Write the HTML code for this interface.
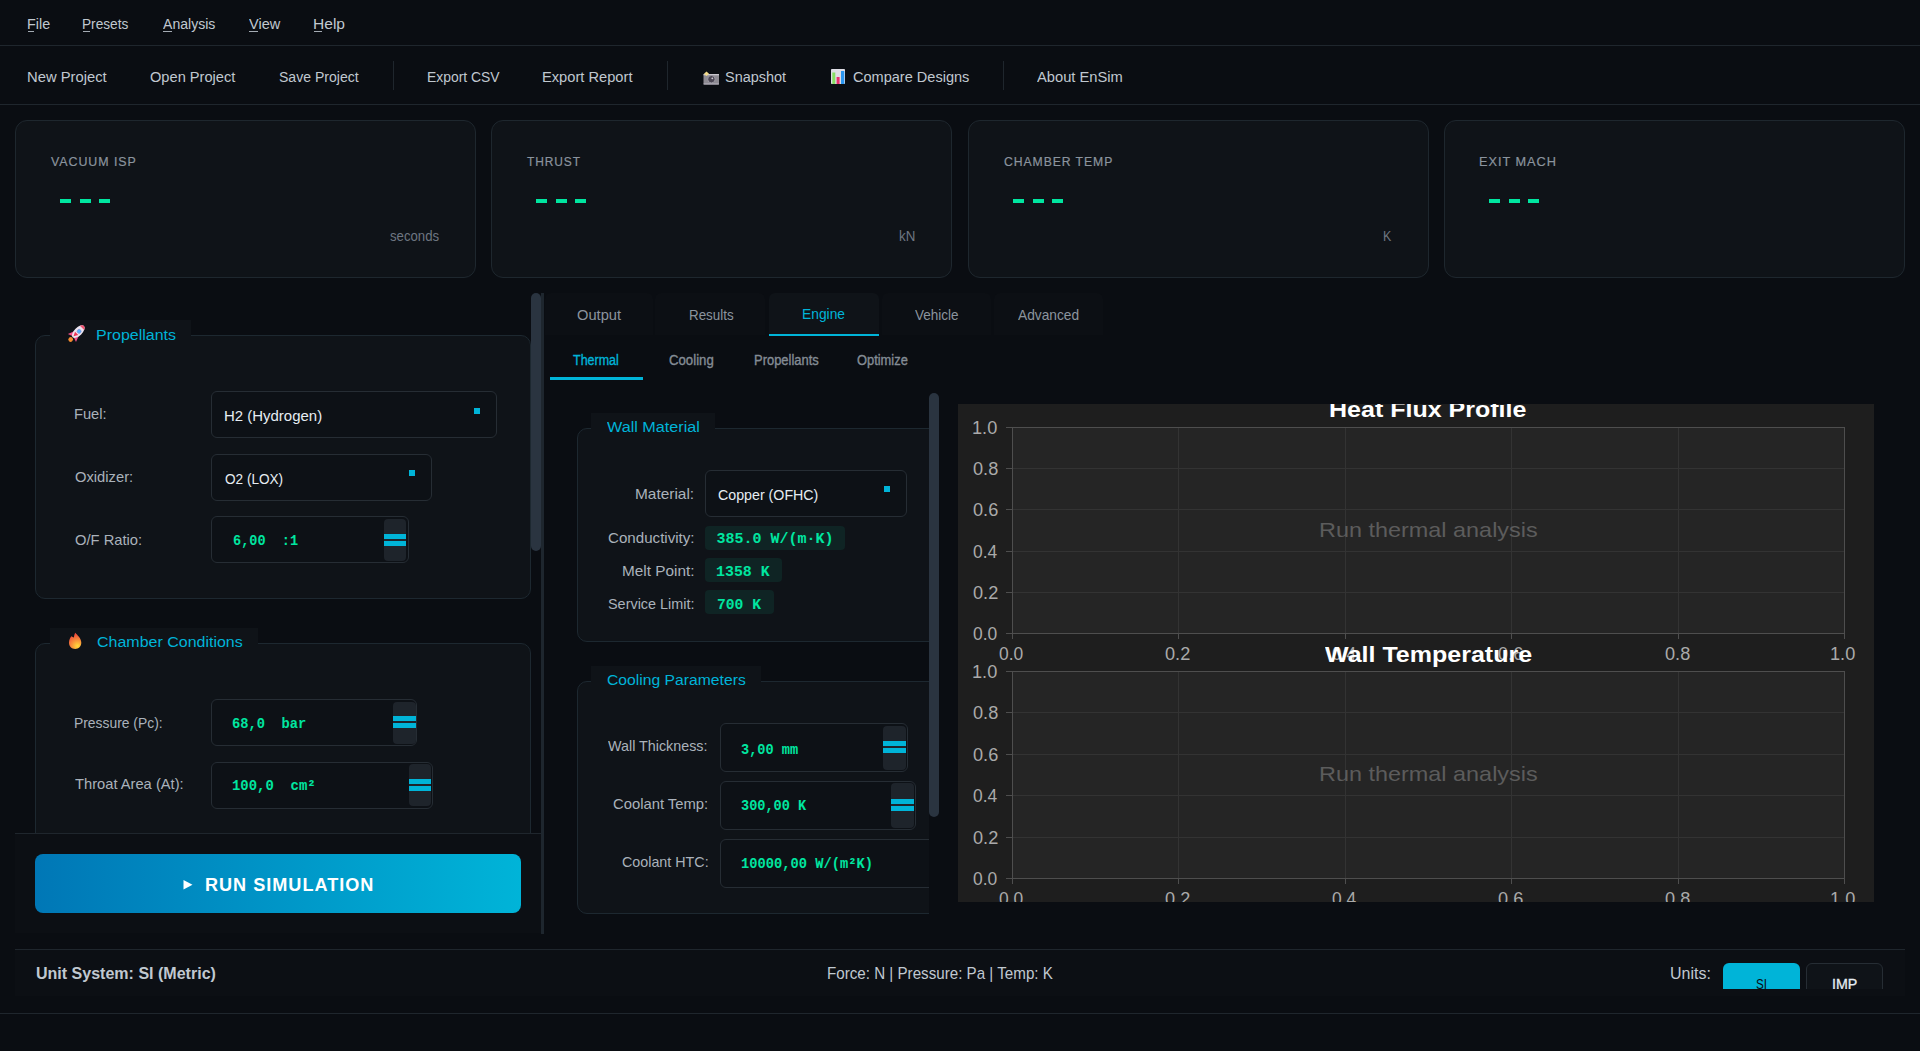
<!DOCTYPE html>
<html><head><meta charset="utf-8"><title>EnSim</title>
<style>
html,body{margin:0;padding:0;}
body{width:1920px;height:1051px;background:#0a0d12;position:relative;overflow:hidden;font-family:"Liberation Sans",sans-serif;}
</style></head><body>
<div style='position:absolute;left:27.08px;top:16.00px;font-family:"Liberation Sans",sans-serif;font-size:15.5px;font-weight:400;line-height:15.5px;color:#c0c8d0;white-space:pre;letter-spacing:0px;transform:scaleX(0.9248);transform-origin:0 0;'>File</div>
<div style='position:absolute;left:82.42px;top:16.00px;font-family:"Liberation Sans",sans-serif;font-size:15.5px;font-weight:400;line-height:15.5px;color:#c0c8d0;white-space:pre;letter-spacing:0px;transform:scaleX(0.8823);transform-origin:0 0;'>Presets</div>
<div style='position:absolute;left:163.00px;top:16.00px;font-family:"Liberation Sans",sans-serif;font-size:15.5px;font-weight:400;line-height:15.5px;color:#c0c8d0;white-space:pre;letter-spacing:0px;transform:scaleX(0.9074);transform-origin:0 0;'>Analysis</div>
<div style='position:absolute;left:249.00px;top:16.00px;font-family:"Liberation Sans",sans-serif;font-size:15.5px;font-weight:400;line-height:15.5px;color:#c0c8d0;white-space:pre;letter-spacing:0px;transform:scaleX(0.9378);transform-origin:0 0;'>View</div>
<div style='position:absolute;left:313.00px;top:16.00px;font-family:"Liberation Sans",sans-serif;font-size:15.5px;font-weight:400;line-height:15.5px;color:#c0c8d0;white-space:pre;letter-spacing:0px;transform:scaleX(1.0047);transform-origin:0 0;'>Help</div>
<div style='position:absolute;left:28px;top:31px;width:6px;height:1px;background:#c0c8d0;opacity:.85'></div>
<div style='position:absolute;left:83.3px;top:31px;width:7px;height:1px;background:#c0c8d0;opacity:.85'></div>
<div style='position:absolute;left:163px;top:31px;width:9px;height:1px;background:#c0c8d0;opacity:.85'></div>
<div style='position:absolute;left:249px;top:31px;width:9px;height:1px;background:#c0c8d0;opacity:.85'></div>
<div style='position:absolute;left:314px;top:31px;width:8px;height:1px;background:#c0c8d0;opacity:.85'></div>
<div style='position:absolute;left:0px;top:45px;width:1920px;height:1px;background:#1f262d'></div>
<div style='position:absolute;left:27.35px;top:69.00px;font-family:"Liberation Sans",sans-serif;font-size:15.5px;font-weight:400;line-height:15.5px;color:#c0c8d0;white-space:pre;letter-spacing:0px;transform:scaleX(0.9538);transform-origin:0 0;'>New Project</div>
<div style='position:absolute;left:150.00px;top:69.00px;font-family:"Liberation Sans",sans-serif;font-size:15.5px;font-weight:400;line-height:15.5px;color:#c0c8d0;white-space:pre;letter-spacing:0px;transform:scaleX(0.9434);transform-origin:0 0;'>Open Project</div>
<div style='position:absolute;left:278.50px;top:69.00px;font-family:"Liberation Sans",sans-serif;font-size:15.5px;font-weight:400;line-height:15.5px;color:#c0c8d0;white-space:pre;letter-spacing:0px;transform:scaleX(0.9066);transform-origin:0 0;'>Save Project</div>
<div style='position:absolute;left:426.80px;top:69.00px;font-family:"Liberation Sans",sans-serif;font-size:15.5px;font-weight:400;line-height:15.5px;color:#c0c8d0;white-space:pre;letter-spacing:0px;transform:scaleX(0.8966);transform-origin:0 0;'>Export CSV</div>
<div style='position:absolute;left:541.55px;top:69.00px;font-family:"Liberation Sans",sans-serif;font-size:15.5px;font-weight:400;line-height:15.5px;color:#c0c8d0;white-space:pre;letter-spacing:0px;transform:scaleX(0.9463);transform-origin:0 0;'>Export Report</div>
<div style='position:absolute;left:725.00px;top:69.00px;font-family:"Liberation Sans",sans-serif;font-size:15.5px;font-weight:400;line-height:15.5px;color:#c0c8d0;white-space:pre;letter-spacing:0px;transform:scaleX(0.9322);transform-origin:0 0;'>Snapshot</div>
<div style='position:absolute;left:852.70px;top:69.00px;font-family:"Liberation Sans",sans-serif;font-size:15.5px;font-weight:400;line-height:15.5px;color:#c0c8d0;white-space:pre;letter-spacing:0px;transform:scaleX(0.9380);transform-origin:0 0;'>Compare Designs</div>
<div style='position:absolute;left:1037.30px;top:69.00px;font-family:"Liberation Sans",sans-serif;font-size:15.5px;font-weight:400;line-height:15.5px;color:#c0c8d0;white-space:pre;letter-spacing:0px;transform:scaleX(0.9492);transform-origin:0 0;'>About EnSim</div>
<div style='position:absolute;left:393px;top:61px;width:1px;height:29px;background:#1f262d'></div>
<div style='position:absolute;left:667px;top:61px;width:1px;height:29px;background:#1f262d'></div>
<div style='position:absolute;left:1003px;top:61px;width:1px;height:29px;background:#1f262d'></div>
<div style='position:absolute;left:0px;top:104px;width:1920px;height:1px;background:#1f262d'></div>
<div style='position:absolute;left:15px;top:120px;width:461px;height:158px;box-sizing:border-box;border:1px solid #1e272e;border-radius:12px;background:#0f1318'></div>
<div style='position:absolute;left:51.40px;top:155.00px;font-family:"Liberation Sans",sans-serif;font-size:13.2px;font-weight:400;line-height:13.2px;color:#8b949e;white-space:pre;letter-spacing:1px;transform:scaleX(0.9414);transform-origin:0 0;-webkit-text-stroke:0.2px currentColor;'>VACUUM ISP</div>
<div style='position:absolute;left:60px;top:199px;width:11px;height:4px;background:#00e6a0'></div>
<div style='position:absolute;left:79.6px;top:199px;width:11px;height:4px;background:#00e6a0'></div>
<div style='position:absolute;left:99px;top:199px;width:11px;height:4px;background:#00e6a0'></div>
<div style='position:absolute;left:390.00px;top:229.00px;font-family:"Liberation Sans",sans-serif;font-size:14.3px;font-weight:400;line-height:14.3px;color:#6e7681;white-space:pre;letter-spacing:0px;transform:scaleX(0.9228);transform-origin:0 0;'>seconds</div>
<div style='position:absolute;left:491px;top:120px;width:461px;height:158px;box-sizing:border-box;border:1px solid #1e272e;border-radius:12px;background:#0f1318'></div>
<div style='position:absolute;left:527.40px;top:155.00px;font-family:"Liberation Sans",sans-serif;font-size:13.2px;font-weight:400;line-height:13.2px;color:#8b949e;white-space:pre;letter-spacing:1px;transform:scaleX(0.9072);transform-origin:0 0;-webkit-text-stroke:0.2px currentColor;'>THRUST</div>
<div style='position:absolute;left:536px;top:199px;width:11px;height:4px;background:#00e6a0'></div>
<div style='position:absolute;left:555.6px;top:199px;width:11px;height:4px;background:#00e6a0'></div>
<div style='position:absolute;left:575px;top:199px;width:11px;height:4px;background:#00e6a0'></div>
<div style='position:absolute;left:899.00px;top:229.00px;font-family:"Liberation Sans",sans-serif;font-size:14.3px;font-weight:400;line-height:14.3px;color:#6e7681;white-space:pre;letter-spacing:0px;transform:scaleX(0.9330);transform-origin:0 0;'>kN</div>
<div style='position:absolute;left:968px;top:120px;width:461px;height:158px;box-sizing:border-box;border:1px solid #1e272e;border-radius:12px;background:#0f1318'></div>
<div style='position:absolute;left:1004.40px;top:155.00px;font-family:"Liberation Sans",sans-serif;font-size:13.2px;font-weight:400;line-height:13.2px;color:#8b949e;white-space:pre;letter-spacing:1px;transform:scaleX(0.9255);transform-origin:0 0;-webkit-text-stroke:0.2px currentColor;'>CHAMBER TEMP</div>
<div style='position:absolute;left:1013px;top:199px;width:11px;height:4px;background:#00e6a0'></div>
<div style='position:absolute;left:1032.6px;top:199px;width:11px;height:4px;background:#00e6a0'></div>
<div style='position:absolute;left:1052px;top:199px;width:11px;height:4px;background:#00e6a0'></div>
<div style='position:absolute;left:1383.33px;top:229.00px;font-family:"Liberation Sans",sans-serif;font-size:14.3px;font-weight:400;line-height:14.3px;color:#6e7681;white-space:pre;letter-spacing:0px;transform:scaleX(0.8667);transform-origin:0 0;'>K</div>
<div style='position:absolute;left:1444px;top:120px;width:461px;height:158px;box-sizing:border-box;border:1px solid #1e272e;border-radius:12px;background:#0f1318'></div>
<div style='position:absolute;left:1479.43px;top:155.00px;font-family:"Liberation Sans",sans-serif;font-size:13.2px;font-weight:400;line-height:13.2px;color:#8b949e;white-space:pre;letter-spacing:1px;transform:scaleX(0.9658);transform-origin:0 0;-webkit-text-stroke:0.2px currentColor;'>EXIT MACH</div>
<div style='position:absolute;left:1489px;top:199px;width:11px;height:4px;background:#00e6a0'></div>
<div style='position:absolute;left:1508.6px;top:199px;width:11px;height:4px;background:#00e6a0'></div>
<div style='position:absolute;left:1528px;top:199px;width:11px;height:4px;background:#00e6a0'></div>
<div style='position:absolute;left:15px;top:833px;width:526px;height:100px;background:#0c0f14'></div>
<div style='position:absolute;left:15px;top:833px;width:526px;height:1px;background:#1f262d'></div>
<div style='position:absolute;left:15px;top:293px;width:516px;height:540px;overflow:hidden'><div style='position:absolute;left:-15px;top:-293px;width:1920px;height:1051px'>
<div style='position:absolute;left:35px;top:335px;width:496px;height:264px;box-sizing:border-box;border:1px solid #1d2830;border-radius:10px;background:#0f1318'></div>
<div style='position:absolute;left:50px;top:320px;width:141px;height:17px;background:#0f1318'></div>
<div style='position:absolute;left:96.27px;top:327.00px;font-family:"Liberation Sans",sans-serif;font-size:15.5px;font-weight:400;line-height:15.5px;color:#00b4d8;white-space:pre;letter-spacing:0px;transform:scaleX(1.0313);transform-origin:0 0;'>Propellants</div>
<div style='position:absolute;left:74.02px;top:406.20px;font-family:"Liberation Sans",sans-serif;font-size:15px;font-weight:400;line-height:15px;color:#aab2bb;white-space:pre;letter-spacing:0px;transform:scaleX(0.9782);transform-origin:0 0;'>Fuel:</div>
<div style='position:absolute;left:75.00px;top:469.30px;font-family:"Liberation Sans",sans-serif;font-size:15px;font-weight:400;line-height:15px;color:#aab2bb;white-space:pre;letter-spacing:0px;transform:scaleX(0.9826);transform-origin:0 0;'>Oxidizer:</div>
<div style='position:absolute;left:75.00px;top:531.70px;font-family:"Liberation Sans",sans-serif;font-size:15px;font-weight:400;line-height:15px;color:#aab2bb;white-space:pre;letter-spacing:0px;transform:scaleX(0.9824);transform-origin:0 0;'>O/F Ratio:</div>
<div style='position:absolute;left:211px;top:391px;width:286px;height:47px;box-sizing:border-box;border:1px solid #262d34;border-radius:6px;background:#0d1116'></div>
<div style='position:absolute;left:474px;top:408px;width:6px;height:6px;background:#00b4d8'></div>
<div style='position:absolute;left:224.33px;top:407.90px;font-family:"Liberation Sans",sans-serif;font-size:15.5px;font-weight:400;line-height:15.5px;color:#e6edf3;white-space:pre;letter-spacing:0px;transform:scaleX(0.9653);transform-origin:0 0;'>H2 (Hydrogen)</div>
<div style='position:absolute;left:211px;top:454px;width:221px;height:47px;box-sizing:border-box;border:1px solid #262d34;border-radius:6px;background:#0d1116'></div>
<div style='position:absolute;left:409px;top:470px;width:6px;height:6px;background:#00b4d8'></div>
<div style='position:absolute;left:225.30px;top:470.70px;font-family:"Liberation Sans",sans-serif;font-size:15.5px;font-weight:400;line-height:15.5px;color:#e6edf3;white-space:pre;letter-spacing:0px;transform:scaleX(0.8767);transform-origin:0 0;'>O2 (LOX)</div>
<div style='position:absolute;left:211px;top:516px;width:198px;height:47px;box-sizing:border-box;border:1px solid #262d34;border-radius:6px;background:#0d1116'></div>
<div style='position:absolute;left:384px;top:519px;width:22px;height:42px;background:#1e242b;border-radius:4px'></div>
<div style='position:absolute;left:384px;top:534px;width:22px;height:5px;background:#00b4d8'></div>
<div style='position:absolute;left:384px;top:541px;width:22px;height:5px;background:#00b4d8'></div>
<div style='position:absolute;left:232.70px;top:533.60px;font-family:"Liberation Mono",monospace;font-size:14.5px;font-weight:700;line-height:14.5px;color:#00e6a0;white-space:pre;letter-spacing:0px;transform:scaleX(0.9341);transform-origin:0 0;'>6,00  :1</div>
<div style='position:absolute;left:35px;top:643px;width:496px;height:300px;box-sizing:border-box;border:1px solid #1d2830;border-radius:10px;background:#0f1318'></div>
<div style='position:absolute;left:50px;top:628px;width:208px;height:17px;background:#0f1318'></div>
<div style='position:absolute;left:96.80px;top:634.00px;font-family:"Liberation Sans",sans-serif;font-size:15.5px;font-weight:400;line-height:15.5px;color:#00b4d8;white-space:pre;letter-spacing:0px;transform:scaleX(1.0315);transform-origin:0 0;'>Chamber Conditions</div>
<div style='position:absolute;left:74.48px;top:714.50px;font-family:"Liberation Sans",sans-serif;font-size:15px;font-weight:400;line-height:15px;color:#aab2bb;white-space:pre;letter-spacing:0px;transform:scaleX(0.9244);transform-origin:0 0;'>Pressure (Pc):</div>
<div style='position:absolute;left:75.40px;top:776.40px;font-family:"Liberation Sans",sans-serif;font-size:15px;font-weight:400;line-height:15px;color:#aab2bb;white-space:pre;letter-spacing:0px;transform:scaleX(0.9798);transform-origin:0 0;'>Throat Area (At):</div>
<div style='position:absolute;left:211px;top:699px;width:206px;height:47px;box-sizing:border-box;border:1px solid #262d34;border-radius:6px;background:#0d1116'></div>
<div style='position:absolute;left:392.5px;top:701.5px;width:23px;height:42px;background:#1e242b;border-radius:4px'></div>
<div style='position:absolute;left:392.5px;top:716.3px;width:23px;height:5px;background:#00b4d8'></div>
<div style='position:absolute;left:392.5px;top:723.3px;width:23px;height:5px;background:#00b4d8'></div>
<div style='position:absolute;left:232.30px;top:717.00px;font-family:"Liberation Mono",monospace;font-size:14.5px;font-weight:700;line-height:14.5px;color:#00e6a0;white-space:pre;letter-spacing:0px;transform:scaleX(0.9496);transform-origin:0 0;'>68,0  bar</div>
<div style='position:absolute;left:211px;top:762px;width:222px;height:47px;box-sizing:border-box;border:1px solid #262d34;border-radius:6px;background:#0d1116'></div>
<div style='position:absolute;left:409px;top:764px;width:22px;height:42px;background:#1e242b;border-radius:4px'></div>
<div style='position:absolute;left:409px;top:778.7px;width:22px;height:5px;background:#00b4d8'></div>
<div style='position:absolute;left:409px;top:785.7px;width:22px;height:5px;background:#00b4d8'></div>
<div style='position:absolute;left:232.30px;top:778.50px;font-family:"Liberation Mono",monospace;font-size:14.5px;font-weight:700;line-height:14.5px;color:#00e6a0;white-space:pre;letter-spacing:0px;transform:scaleX(0.9612);transform-origin:0 0;'>100,0  cm²</div>
</div></div>
<div style='position:absolute;left:531px;top:293px;width:10px;height:258px;background:#2a3440;border-radius:5px'></div>
<div style='position:absolute;left:541px;top:293px;width:3px;height:641px;background:#1e262e'></div>
<div style='position:absolute;left:35px;top:854px;width:486px;height:59px;border-radius:8px;background:linear-gradient(90deg,#0077b6,#00b4d8)'></div>
<svg style='position:absolute;left:183px;top:880px' width='10' height='10'><path d='M0.5 0 L9.5 4.75 L0.5 9.5 Z' fill='#ffffff'/></svg>
<div style='position:absolute;left:205.00px;top:876.20px;font-family:"Liberation Sans",sans-serif;font-size:18px;font-weight:700;line-height:18px;color:#ffffff;white-space:pre;letter-spacing:1px;transform:scaleX(1.0045);transform-origin:0 0;'>RUN SIMULATION</div>
<div style='position:absolute;left:545px;top:293px;width:108px;height:42px;border-radius:6px 6px 0 0;background:#0c0f14'></div>
<div style='position:absolute;left:655px;top:293px;width:110px;height:42px;border-radius:6px 6px 0 0;background:#0c0f14'></div>
<div style='position:absolute;left:769px;top:293px;width:110px;height:42px;border-radius:6px 6px 0 0;background:#0f1318'></div>
<div style='position:absolute;left:882px;top:293px;width:109px;height:42px;border-radius:6px 6px 0 0;background:#0c0f14'></div>
<div style='position:absolute;left:994px;top:293px;width:109px;height:42px;border-radius:6px 6px 0 0;background:#0c0f14'></div>
<div style='position:absolute;left:769px;top:334px;width:110px;height:2px;background:#00b4d8'></div>
<div style='position:absolute;left:576.70px;top:308.00px;font-family:"Liberation Sans",sans-serif;font-size:14.5px;font-weight:400;line-height:14.5px;color:#8b949e;white-space:pre;letter-spacing:0px;transform:scaleX(1.0115);transform-origin:0 0;'>Output</div>
<div style='position:absolute;left:688.58px;top:308.00px;font-family:"Liberation Sans",sans-serif;font-size:14.5px;font-weight:400;line-height:14.5px;color:#8b949e;white-space:pre;letter-spacing:0px;transform:scaleX(0.9236);transform-origin:0 0;'>Results</div>
<div style='position:absolute;left:801.80px;top:307.20px;font-family:"Liberation Sans",sans-serif;font-size:14.5px;font-weight:400;line-height:14.5px;color:#00b4d8;white-space:pre;letter-spacing:0px;transform:scaleX(0.9527);transform-origin:0 0;'>Engine</div>
<div style='position:absolute;left:914.70px;top:308.00px;font-family:"Liberation Sans",sans-serif;font-size:14.5px;font-weight:400;line-height:14.5px;color:#8b949e;white-space:pre;letter-spacing:0px;transform:scaleX(0.9316);transform-origin:0 0;'>Vehicle</div>
<div style='position:absolute;left:1018.40px;top:308.00px;font-family:"Liberation Sans",sans-serif;font-size:14.5px;font-weight:400;line-height:14.5px;color:#8b949e;white-space:pre;letter-spacing:0px;transform:scaleX(0.9468);transform-origin:0 0;'>Advanced</div>
<div style='position:absolute;left:573.30px;top:353.30px;font-family:"Liberation Sans",sans-serif;font-size:14px;font-weight:400;line-height:14px;color:#00b4d8;white-space:pre;letter-spacing:0px;transform:scaleX(0.8920);transform-origin:0 0;-webkit-text-stroke:0.35px currentColor;'>Thermal</div>
<div style='position:absolute;left:669.00px;top:353.30px;font-family:"Liberation Sans",sans-serif;font-size:14px;font-weight:400;line-height:14px;color:#848c95;white-space:pre;letter-spacing:0px;transform:scaleX(0.9424);transform-origin:0 0;-webkit-text-stroke:0.35px currentColor;'>Cooling</div>
<div style='position:absolute;left:754.08px;top:353.30px;font-family:"Liberation Sans",sans-serif;font-size:14px;font-weight:400;line-height:14px;color:#848c95;white-space:pre;letter-spacing:0px;transform:scaleX(0.9241);transform-origin:0 0;-webkit-text-stroke:0.35px currentColor;'>Propellants</div>
<div style='position:absolute;left:857.00px;top:353.30px;font-family:"Liberation Sans",sans-serif;font-size:14px;font-weight:400;line-height:14px;color:#848c95;white-space:pre;letter-spacing:0px;transform:scaleX(0.9198);transform-origin:0 0;-webkit-text-stroke:0.35px currentColor;'>Optimize</div>
<div style='position:absolute;left:550px;top:377px;width:93px;height:3px;background:#00b4d8'></div>
<div style='position:absolute;left:550px;top:393px;width:379px;height:540px;overflow:hidden'><div style='position:absolute;left:-550px;top:-393px;width:1920px;height:1051px'>
<div style='position:absolute;left:577px;top:428px;width:400px;height:214px;box-sizing:border-box;border:1px solid #1d2830;border-radius:10px;background:#0f1318'></div>
<div style='position:absolute;left:591px;top:413px;width:124px;height:17px;background:#0f1318'></div>
<div style='position:absolute;left:606.60px;top:419.20px;font-family:"Liberation Sans",sans-serif;font-size:15.5px;font-weight:400;line-height:15.5px;color:#00b4d8;white-space:pre;letter-spacing:0px;transform:scaleX(1.0434);transform-origin:0 0;'>Wall Material</div>
<div style='position:absolute;left:635.27px;top:485.50px;font-family:"Liberation Sans",sans-serif;font-size:15px;font-weight:400;line-height:15px;color:#aab2bb;white-space:pre;letter-spacing:0px;transform:scaleX(1.0280);transform-origin:0 0;'>Material:</div>
<div style='position:absolute;left:705px;top:470px;width:202px;height:47px;box-sizing:border-box;border:1px solid #262d34;border-radius:6px;background:#0d1116'></div>
<div style='position:absolute;left:884px;top:486px;width:6px;height:6px;background:#00b4d8'></div>
<div style='position:absolute;left:718.40px;top:487.20px;font-family:"Liberation Sans",sans-serif;font-size:15.5px;font-weight:400;line-height:15.5px;color:#e6edf3;white-space:pre;letter-spacing:0px;transform:scaleX(0.9174);transform-origin:0 0;'>Copper (OFHC)</div>
<div style='position:absolute;left:705px;top:526px;width:140px;height:24px;background:#0f2424;border-radius:4px'></div>
<div style='position:absolute;left:716.50px;top:532.00px;font-family:"Liberation Mono",monospace;font-size:15px;font-weight:700;line-height:15px;color:#00e6a0;white-space:pre;letter-spacing:0px;'>385.0 W/(m·K)</div>
<div style='position:absolute;left:607.80px;top:529.70px;font-family:"Liberation Sans",sans-serif;font-size:15px;font-weight:400;line-height:15px;color:#aab2bb;white-space:pre;letter-spacing:0px;transform:scaleX(1.0082);transform-origin:0 0;'>Conductivity:</div>
<div style='position:absolute;left:705px;top:558px;width:77px;height:24px;background:#0f2424;border-radius:4px'></div>
<div style='position:absolute;left:715.51px;top:565.00px;font-family:"Liberation Mono",monospace;font-size:15px;font-weight:700;line-height:15px;color:#00e6a0;white-space:pre;letter-spacing:0px;transform:scaleX(0.9942);transform-origin:0 0;'>1358 K</div>
<div style='position:absolute;left:621.88px;top:562.70px;font-family:"Liberation Sans",sans-serif;font-size:15px;font-weight:400;line-height:15px;color:#aab2bb;white-space:pre;letter-spacing:0px;transform:scaleX(1.0234);transform-origin:0 0;'>Melt Point:</div>
<div style='position:absolute;left:705px;top:590px;width:68.5px;height:24px;background:#0f2424;border-radius:4px'></div>
<div style='position:absolute;left:716.50px;top:598.00px;font-family:"Liberation Mono",monospace;font-size:15px;font-weight:700;line-height:15px;color:#00e6a0;white-space:pre;letter-spacing:0px;transform:scaleX(0.9777);transform-origin:0 0;'>700 K</div>
<div style='position:absolute;left:607.80px;top:595.70px;font-family:"Liberation Sans",sans-serif;font-size:15px;font-weight:400;line-height:15px;color:#aab2bb;white-space:pre;letter-spacing:0px;transform:scaleX(0.9611);transform-origin:0 0;'>Service Limit:</div>
<div style='position:absolute;left:577px;top:681px;width:400px;height:233px;box-sizing:border-box;border:1px solid #1d2830;border-radius:10px;background:#0f1318'></div>
<div style='position:absolute;left:591px;top:665.5px;width:170px;height:17.5px;background:#0f1318'></div>
<div style='position:absolute;left:606.50px;top:672.20px;font-family:"Liberation Sans",sans-serif;font-size:15.5px;font-weight:400;line-height:15.5px;color:#00b4d8;white-space:pre;letter-spacing:0px;transform:scaleX(1.0129);transform-origin:0 0;'>Cooling Parameters</div>
<div style='position:absolute;left:607.80px;top:738.30px;font-family:"Liberation Sans",sans-serif;font-size:15px;font-weight:400;line-height:15px;color:#aab2bb;white-space:pre;letter-spacing:0px;transform:scaleX(0.9545);transform-origin:0 0;'>Wall Thickness:</div>
<div style='position:absolute;left:612.70px;top:795.70px;font-family:"Liberation Sans",sans-serif;font-size:15px;font-weight:400;line-height:15px;color:#aab2bb;white-space:pre;letter-spacing:0px;transform:scaleX(0.9869);transform-origin:0 0;'>Coolant Temp:</div>
<div style='position:absolute;left:621.50px;top:853.50px;font-family:"Liberation Sans",sans-serif;font-size:15px;font-weight:400;line-height:15px;color:#aab2bb;white-space:pre;letter-spacing:0px;transform:scaleX(0.9532);transform-origin:0 0;'>Coolant HTC:</div>
<div style='position:absolute;left:720px;top:723px;width:188px;height:49px;box-sizing:border-box;border:1px solid #262d34;border-radius:6px;background:#0d1116'></div>
<div style='position:absolute;left:882.5px;top:725.5px;width:23px;height:44.5px;background:#1e242b;border-radius:4px'></div>
<div style='position:absolute;left:882.5px;top:741.2px;width:23px;height:5px;background:#00b4d8'></div>
<div style='position:absolute;left:882.5px;top:748.2px;width:23px;height:5px;background:#00b4d8'></div>
<div style='position:absolute;left:740.50px;top:742.50px;font-family:"Liberation Mono",monospace;font-size:14.5px;font-weight:700;line-height:14.5px;color:#00e6a0;white-space:pre;letter-spacing:0px;transform:scaleX(0.9394);transform-origin:0 0;'>3,00 mm</div>
<div style='position:absolute;left:720px;top:780.5px;width:196px;height:49px;box-sizing:border-box;border:1px solid #262d34;border-radius:6px;background:#0d1116'></div>
<div style='position:absolute;left:891.3px;top:783px;width:23px;height:44.5px;background:#1e242b;border-radius:4px'></div>
<div style='position:absolute;left:891.3px;top:798.5px;width:23px;height:5px;background:#00b4d8'></div>
<div style='position:absolute;left:891.3px;top:805.5px;width:23px;height:5px;background:#00b4d8'></div>
<div style='position:absolute;left:740.50px;top:799.00px;font-family:"Liberation Mono",monospace;font-size:14.5px;font-weight:700;line-height:14.5px;color:#00e6a0;white-space:pre;letter-spacing:0px;transform:scaleX(0.9369);transform-origin:0 0;'>300,00 K</div>
<div style='position:absolute;left:720px;top:838.5px;width:260px;height:49px;box-sizing:border-box;border:1px solid #262d34;border-radius:6px;background:#0d1116'></div>
<div style='position:absolute;left:740.50px;top:857.00px;font-family:"Liberation Mono",monospace;font-size:14.5px;font-weight:700;line-height:14.5px;color:#00e6a0;white-space:pre;letter-spacing:0px;transform:scaleX(0.9475);transform-origin:0 0;'>10000,00 W/(m²K)</div>
</div></div>
<div style='position:absolute;left:929px;top:393px;width:10px;height:424px;background:#2a3440;border-radius:5px'></div>
<div style='position:absolute;left:958px;top:404px;width:916px;height:498px;background:#1e1e1e'></div>
<div style='position:absolute;left:958px;top:404px;width:916px;height:498px;overflow:hidden'><div style='position:absolute;left:-958px;top:-404px;width:1920px;height:1051px'>
<div style='position:absolute;left:1012px;top:427px;width:832px;height:206px;background:#252525'></div>
<div style='position:absolute;left:1178px;top:427px;width:1px;height:206px;background:#333333'></div>
<div style='position:absolute;left:1345px;top:427px;width:1px;height:206px;background:#333333'></div>
<div style='position:absolute;left:1511px;top:427px;width:1px;height:206px;background:#333333'></div>
<div style='position:absolute;left:1678px;top:427px;width:1px;height:206px;background:#333333'></div>
<div style='position:absolute;left:1012px;top:468px;width:832px;height:1px;background:#333333'></div>
<div style='position:absolute;left:1012px;top:509px;width:832px;height:1px;background:#333333'></div>
<div style='position:absolute;left:1012px;top:551px;width:832px;height:1px;background:#333333'></div>
<div style='position:absolute;left:1012px;top:592px;width:832px;height:1px;background:#333333'></div>
<div style='position:absolute;left:1012px;top:427px;width:1px;height:207px;background:#4e4e4e'></div>
<div style='position:absolute;left:1844px;top:427px;width:1px;height:207px;background:#4e4e4e'></div>
<div style='position:absolute;left:1012px;top:427px;width:833px;height:1px;background:#4e4e4e'></div>
<div style='position:absolute;left:1012px;top:633px;width:833px;height:1px;background:#4e4e4e'></div>
<div style='position:absolute;left:1006px;top:427px;width:6px;height:1px;background:#4e4e4e'></div>
<div style='position:absolute;left:972.26px;top:420.00px;font-family:"Liberation Sans",sans-serif;font-size:17.5px;font-weight:400;line-height:17.5px;color:#aaaaaa;white-space:pre;letter-spacing:0px;transform:scaleX(1.0384);transform-origin:0 0;'>1.0</div>
<div style='position:absolute;left:1012px;top:633px;width:1px;height:6px;background:#4e4e4e'></div>
<div style='position:absolute;left:999.25px;top:645.60px;font-family:"Liberation Sans",sans-serif;font-size:17.5px;font-weight:400;line-height:17.5px;color:#aaaaaa;white-space:pre;letter-spacing:0px;transform:scaleX(0.9961);transform-origin:0 0;'>0.0</div>
<div style='position:absolute;left:1006px;top:468px;width:6px;height:1px;background:#4e4e4e'></div>
<div style='position:absolute;left:973.30px;top:461.00px;font-family:"Liberation Sans",sans-serif;font-size:17.5px;font-weight:400;line-height:17.5px;color:#aaaaaa;white-space:pre;letter-spacing:0px;transform:scaleX(1.0384);transform-origin:0 0;'>0.8</div>
<div style='position:absolute;left:1178px;top:633px;width:1px;height:6px;background:#4e4e4e'></div>
<div style='position:absolute;left:1165.25px;top:645.60px;font-family:"Liberation Sans",sans-serif;font-size:17.5px;font-weight:400;line-height:17.5px;color:#aaaaaa;white-space:pre;letter-spacing:0px;transform:scaleX(1.0384);transform-origin:0 0;'>0.2</div>
<div style='position:absolute;left:1006px;top:509px;width:6px;height:1px;background:#4e4e4e'></div>
<div style='position:absolute;left:973.30px;top:502.00px;font-family:"Liberation Sans",sans-serif;font-size:17.5px;font-weight:400;line-height:17.5px;color:#aaaaaa;white-space:pre;letter-spacing:0px;transform:scaleX(1.0384);transform-origin:0 0;'>0.6</div>
<div style='position:absolute;left:1345px;top:633px;width:1px;height:6px;background:#4e4e4e'></div>
<div style='position:absolute;left:1332.25px;top:645.60px;font-family:"Liberation Sans",sans-serif;font-size:17.5px;font-weight:400;line-height:17.5px;color:#aaaaaa;white-space:pre;letter-spacing:0px;transform:scaleX(0.9961);transform-origin:0 0;'>0.4</div>
<div style='position:absolute;left:1006px;top:551px;width:6px;height:1px;background:#4e4e4e'></div>
<div style='position:absolute;left:973.30px;top:544.00px;font-family:"Liberation Sans",sans-serif;font-size:17.5px;font-weight:400;line-height:17.5px;color:#aaaaaa;white-space:pre;letter-spacing:0px;transform:scaleX(0.9961);transform-origin:0 0;'>0.4</div>
<div style='position:absolute;left:1511px;top:633px;width:1px;height:6px;background:#4e4e4e'></div>
<div style='position:absolute;left:1498.25px;top:645.60px;font-family:"Liberation Sans",sans-serif;font-size:17.5px;font-weight:400;line-height:17.5px;color:#aaaaaa;white-space:pre;letter-spacing:0px;transform:scaleX(1.0384);transform-origin:0 0;'>0.6</div>
<div style='position:absolute;left:1006px;top:592px;width:6px;height:1px;background:#4e4e4e'></div>
<div style='position:absolute;left:973.30px;top:585.00px;font-family:"Liberation Sans",sans-serif;font-size:17.5px;font-weight:400;line-height:17.5px;color:#aaaaaa;white-space:pre;letter-spacing:0px;transform:scaleX(1.0384);transform-origin:0 0;'>0.2</div>
<div style='position:absolute;left:1678px;top:633px;width:1px;height:6px;background:#4e4e4e'></div>
<div style='position:absolute;left:1665.25px;top:645.60px;font-family:"Liberation Sans",sans-serif;font-size:17.5px;font-weight:400;line-height:17.5px;color:#aaaaaa;white-space:pre;letter-spacing:0px;transform:scaleX(1.0384);transform-origin:0 0;'>0.8</div>
<div style='position:absolute;left:1006px;top:633px;width:6px;height:1px;background:#4e4e4e'></div>
<div style='position:absolute;left:973.30px;top:626.00px;font-family:"Liberation Sans",sans-serif;font-size:17.5px;font-weight:400;line-height:17.5px;color:#aaaaaa;white-space:pre;letter-spacing:0px;transform:scaleX(0.9961);transform-origin:0 0;'>0.0</div>
<div style='position:absolute;left:1844px;top:633px;width:1px;height:6px;background:#4e4e4e'></div>
<div style='position:absolute;left:1830.21px;top:645.60px;font-family:"Liberation Sans",sans-serif;font-size:17.5px;font-weight:400;line-height:17.5px;color:#aaaaaa;white-space:pre;letter-spacing:0px;transform:scaleX(1.0384);transform-origin:0 0;'>1.0</div>
<div style='position:absolute;left:1319.08px;top:518.80px;font-family:"Liberation Sans",sans-serif;font-size:21px;font-weight:400;line-height:21px;color:#5c5c5c;white-space:pre;letter-spacing:0px;transform:scaleX(1.1152);transform-origin:0 0;'>Run thermal analysis</div>
<div style='position:absolute;left:1328.86px;top:398.90px;font-family:"Liberation Sans",sans-serif;font-size:22px;font-weight:700;line-height:22px;color:#ffffff;white-space:pre;letter-spacing:0px;transform:scaleX(1.1372);transform-origin:0 0;'>Heat Flux Profile</div>
<div style='position:absolute;left:1012px;top:671px;width:832px;height:207px;background:#252525'></div>
<div style='position:absolute;left:1178px;top:671px;width:1px;height:207px;background:#333333'></div>
<div style='position:absolute;left:1345px;top:671px;width:1px;height:207px;background:#333333'></div>
<div style='position:absolute;left:1511px;top:671px;width:1px;height:207px;background:#333333'></div>
<div style='position:absolute;left:1678px;top:671px;width:1px;height:207px;background:#333333'></div>
<div style='position:absolute;left:1012px;top:712px;width:832px;height:1px;background:#333333'></div>
<div style='position:absolute;left:1012px;top:754px;width:832px;height:1px;background:#333333'></div>
<div style='position:absolute;left:1012px;top:795px;width:832px;height:1px;background:#333333'></div>
<div style='position:absolute;left:1012px;top:837px;width:832px;height:1px;background:#333333'></div>
<div style='position:absolute;left:1012px;top:671px;width:1px;height:208px;background:#4e4e4e'></div>
<div style='position:absolute;left:1844px;top:671px;width:1px;height:208px;background:#4e4e4e'></div>
<div style='position:absolute;left:1012px;top:671px;width:833px;height:1px;background:#4e4e4e'></div>
<div style='position:absolute;left:1012px;top:878px;width:833px;height:1px;background:#4e4e4e'></div>
<div style='position:absolute;left:1006px;top:671px;width:6px;height:1px;background:#4e4e4e'></div>
<div style='position:absolute;left:972.26px;top:664.00px;font-family:"Liberation Sans",sans-serif;font-size:17.5px;font-weight:400;line-height:17.5px;color:#aaaaaa;white-space:pre;letter-spacing:0px;transform:scaleX(1.0384);transform-origin:0 0;'>1.0</div>
<div style='position:absolute;left:1012px;top:878px;width:1px;height:6px;background:#4e4e4e'></div>
<div style='position:absolute;left:999.25px;top:890.60px;font-family:"Liberation Sans",sans-serif;font-size:17.5px;font-weight:400;line-height:17.5px;color:#aaaaaa;white-space:pre;letter-spacing:0px;transform:scaleX(0.9961);transform-origin:0 0;'>0.0</div>
<div style='position:absolute;left:1006px;top:712px;width:6px;height:1px;background:#4e4e4e'></div>
<div style='position:absolute;left:973.30px;top:705.00px;font-family:"Liberation Sans",sans-serif;font-size:17.5px;font-weight:400;line-height:17.5px;color:#aaaaaa;white-space:pre;letter-spacing:0px;transform:scaleX(1.0384);transform-origin:0 0;'>0.8</div>
<div style='position:absolute;left:1178px;top:878px;width:1px;height:6px;background:#4e4e4e'></div>
<div style='position:absolute;left:1165.25px;top:890.60px;font-family:"Liberation Sans",sans-serif;font-size:17.5px;font-weight:400;line-height:17.5px;color:#aaaaaa;white-space:pre;letter-spacing:0px;transform:scaleX(1.0384);transform-origin:0 0;'>0.2</div>
<div style='position:absolute;left:1006px;top:754px;width:6px;height:1px;background:#4e4e4e'></div>
<div style='position:absolute;left:973.30px;top:747.00px;font-family:"Liberation Sans",sans-serif;font-size:17.5px;font-weight:400;line-height:17.5px;color:#aaaaaa;white-space:pre;letter-spacing:0px;transform:scaleX(1.0384);transform-origin:0 0;'>0.6</div>
<div style='position:absolute;left:1345px;top:878px;width:1px;height:6px;background:#4e4e4e'></div>
<div style='position:absolute;left:1332.25px;top:890.60px;font-family:"Liberation Sans",sans-serif;font-size:17.5px;font-weight:400;line-height:17.5px;color:#aaaaaa;white-space:pre;letter-spacing:0px;transform:scaleX(0.9961);transform-origin:0 0;'>0.4</div>
<div style='position:absolute;left:1006px;top:795px;width:6px;height:1px;background:#4e4e4e'></div>
<div style='position:absolute;left:973.30px;top:788.00px;font-family:"Liberation Sans",sans-serif;font-size:17.5px;font-weight:400;line-height:17.5px;color:#aaaaaa;white-space:pre;letter-spacing:0px;transform:scaleX(0.9961);transform-origin:0 0;'>0.4</div>
<div style='position:absolute;left:1511px;top:878px;width:1px;height:6px;background:#4e4e4e'></div>
<div style='position:absolute;left:1498.25px;top:890.60px;font-family:"Liberation Sans",sans-serif;font-size:17.5px;font-weight:400;line-height:17.5px;color:#aaaaaa;white-space:pre;letter-spacing:0px;transform:scaleX(1.0384);transform-origin:0 0;'>0.6</div>
<div style='position:absolute;left:1006px;top:837px;width:6px;height:1px;background:#4e4e4e'></div>
<div style='position:absolute;left:973.30px;top:830.00px;font-family:"Liberation Sans",sans-serif;font-size:17.5px;font-weight:400;line-height:17.5px;color:#aaaaaa;white-space:pre;letter-spacing:0px;transform:scaleX(1.0384);transform-origin:0 0;'>0.2</div>
<div style='position:absolute;left:1678px;top:878px;width:1px;height:6px;background:#4e4e4e'></div>
<div style='position:absolute;left:1665.25px;top:890.60px;font-family:"Liberation Sans",sans-serif;font-size:17.5px;font-weight:400;line-height:17.5px;color:#aaaaaa;white-space:pre;letter-spacing:0px;transform:scaleX(1.0384);transform-origin:0 0;'>0.8</div>
<div style='position:absolute;left:1006px;top:878px;width:6px;height:1px;background:#4e4e4e'></div>
<div style='position:absolute;left:973.30px;top:871.00px;font-family:"Liberation Sans",sans-serif;font-size:17.5px;font-weight:400;line-height:17.5px;color:#aaaaaa;white-space:pre;letter-spacing:0px;transform:scaleX(0.9961);transform-origin:0 0;'>0.0</div>
<div style='position:absolute;left:1844px;top:878px;width:1px;height:6px;background:#4e4e4e'></div>
<div style='position:absolute;left:1830.21px;top:890.60px;font-family:"Liberation Sans",sans-serif;font-size:17.5px;font-weight:400;line-height:17.5px;color:#aaaaaa;white-space:pre;letter-spacing:0px;transform:scaleX(1.0384);transform-origin:0 0;'>1.0</div>
<div style='position:absolute;left:1319.08px;top:762.80px;font-family:"Liberation Sans",sans-serif;font-size:21px;font-weight:400;line-height:21px;color:#5c5c5c;white-space:pre;letter-spacing:0px;transform:scaleX(1.1152);transform-origin:0 0;'>Run thermal analysis</div>
<div style='position:absolute;left:1324.80px;top:643.90px;font-family:"Liberation Sans",sans-serif;font-size:22px;font-weight:700;line-height:22px;color:#ffffff;white-space:pre;letter-spacing:0px;transform:scaleX(1.1368);transform-origin:0 0;'>Wall Temperature</div>
</div></div>
<div style='position:absolute;left:15px;top:949px;width:1890px;height:1px;background:#1f262d'></div>
<div style='position:absolute;left:15px;top:950px;width:1890px;height:46px;background:#0c0f14'></div>
<div style='position:absolute;left:0px;top:1013px;width:1920px;height:1px;background:#1f262d'></div>
<div style='position:absolute;left:35.60px;top:965.20px;font-family:"Liberation Sans",sans-serif;font-size:16.5px;font-weight:700;line-height:16.5px;color:#c0c8d0;white-space:pre;letter-spacing:0px;transform:scaleX(0.9713);transform-origin:0 0;'>Unit System: SI (Metric)</div>
<div style='position:absolute;left:827.36px;top:965.10px;font-family:"Liberation Sans",sans-serif;font-size:16.2px;font-weight:400;line-height:16.2px;color:#c0c8d0;white-space:pre;letter-spacing:0px;transform:scaleX(0.9368);transform-origin:0 0;'>Force: N | Pressure: Pa | Temp: K</div>
<div style='position:absolute;left:1669.61px;top:965.00px;font-family:"Liberation Sans",sans-serif;font-size:16.2px;font-weight:400;line-height:16.2px;color:#c0c8d0;white-space:pre;letter-spacing:0px;transform:scaleX(0.9880);transform-origin:0 0;'>Units:</div>
<div style='position:absolute;left:1722px;top:962px;width:170px;height:27px;overflow:hidden'><div style='position:absolute;left:-1722px;top:-962px;width:1920px;height:1051px'>
<div style='position:absolute;left:1722.8px;top:963px;width:77.2px;height:40px;background:#00b4d8;border-radius:6px'></div>
<div style='position:absolute;left:1806.3px;top:963px;width:77.2px;height:40px;box-sizing:border-box;border:1px solid #262d34;background:#0f1318;border-radius:6px'></div>
<div style='position:absolute;left:1756.00px;top:975.60px;font-family:"Liberation Sans",sans-serif;font-size:15.5px;font-weight:400;line-height:15.5px;color:#0a0d12;white-space:pre;letter-spacing:0px;transform:scaleX(0.7497);transform-origin:0 0;'>SI</div>
<div style='position:absolute;left:1832.28px;top:975.60px;font-family:"Liberation Sans",sans-serif;font-size:15.5px;font-weight:400;line-height:15.5px;color:#e6edf3;white-space:pre;letter-spacing:0px;transform:scaleX(0.9192);transform-origin:0 0;-webkit-text-stroke:0.3px currentColor;'>IMP</div>
</div></div>
<svg style='position:absolute;left:701px;top:70px' width='20' height='16' viewBox='0 0 20 16'>
<rect x='2.5' y='4' width='15.5' height='10.5' rx='1' fill='#8d8a92'/>
<rect x='2.5' y='4' width='15.5' height='1.3' fill='#c9c6cd'/>
<rect x='2.5' y='13.5' width='15.5' height='1' fill='#b8b4c0'/>
<path d='M5.5 1.6 L8 3.8 L5.5 6 L3 3.8 Z' fill='#f3da8a'/>
<circle cx='10.4' cy='9.2' r='3.7' fill='#4d4855' stroke='#a8a4ae' stroke-width='0.8'/>
<circle cx='11.3' cy='8.3' r='0.9' fill='#cfcbd4'/>
</svg>
<svg style='position:absolute;left:830px;top:68px' width='16' height='17' viewBox='0 0 16 17'>
<rect x='1' y='1' width='14' height='15' rx='0.8' fill='#dedde5'/>
<rect x='2.3' y='4.5' width='3' height='11.5' fill='#86de62'/>
<rect x='6.6' y='9' width='3' height='7' fill='#ea2f6e'/>
<rect x='11' y='3' width='3.3' height='13' fill='#2a96f0'/>
</svg>
<svg style='position:absolute;left:62px;top:320px' width='30' height='30' viewBox='0 0 30 30'>
<defs><clipPath id='rb'><ellipse cx='16.6' cy='12.2' rx='8' ry='4'/></clipPath></defs>
<g transform='rotate(-45 15.7 12.2)'>
<ellipse cx='5.6' cy='12.4' rx='2.4' ry='2.3' fill='#f28a2e'/>
<path d='M7.4 6.6 L14.5 9.2 L14.5 15.2 L7.6 17.9 L9.6 12.2 Z' fill='#f0508c'/>
<ellipse cx='16.6' cy='12.2' rx='8' ry='4' fill='#ece4ef'/>
<rect x='21.8' y='7' width='5' height='11' fill='#f25572' clip-path='url(#rb)'/>
<path d='M9.8 12.2 L14.2 9.9 L14.2 14.5 Z' fill='#ee3456'/>
<circle cx='17.3' cy='12.6' r='2' fill='#52b0ff' stroke='#8a8fd0' stroke-width='0.6'/>
</g>
</svg>
<svg style='position:absolute;left:60px;top:626px' width='30' height='30' viewBox='0 0 30 30'>
<defs><radialGradient id='fg' cx='17.5' cy='20' r='12' gradientUnits='userSpaceOnUse'>
<stop offset='0' stop-color='#ffdc3a'/><stop offset='0.45' stop-color='#f9963a'/><stop offset='1' stop-color='#ee4a3c'/></radialGradient></defs>
<path d='M15.4 6.7 C17 9 21.3 12 21.3 16.6 C21.3 20.6 18.6 23 15.2 23 C11.6 23 9 20.5 9 16.6 C9 13.6 10.4 11.5 11.4 10.3 C12.3 11 13.1 11.3 14 11.5 C14 9.7 14.4 8 15.4 6.7 Z' fill='url(#fg)'/>
</svg>
</body></html>
